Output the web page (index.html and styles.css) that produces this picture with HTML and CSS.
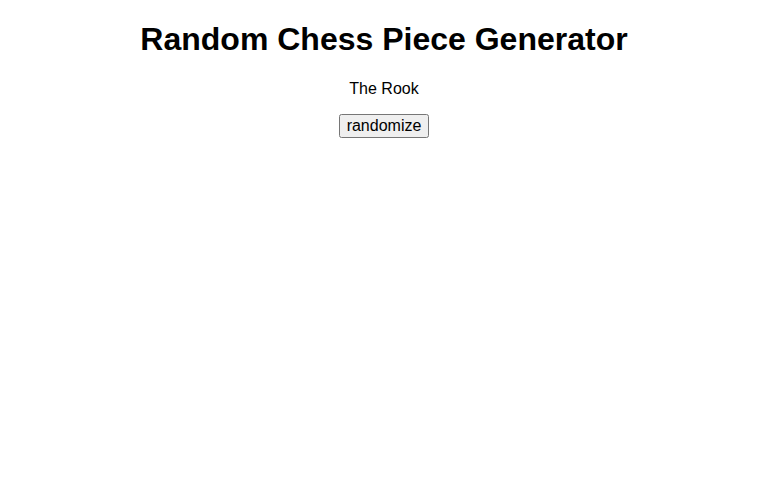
FILE: index.html
```html
<!DOCTYPE html>
<html>
<head>
<meta charset="utf-8">
<link rel="stylesheet" href="styles.css">
</head>
<body>
<div class="app">
  <h1 class="title">Random Chess Piece Generator</h1>
  <p class="piece">The Rook</p>
  <button class="btn">randomize</button>
</div>
</body>
</html>
```
FILE: styles.css
```css
body {
  margin: 0;
  font-family: "Liberation Sans", Arial, sans-serif;
  background: #fff;
  color: #000;
}
.app {
  text-align: center;
}
.title {
  font-size: 32px;
  font-weight: bold;
  margin: 21.44px 0;
}
.piece {
  font-size: 16px;
  margin: 16px 0;
}
.btn {
  font-family: "Liberation Sans", Arial, sans-serif;
  font-size: 16px;
}
```
